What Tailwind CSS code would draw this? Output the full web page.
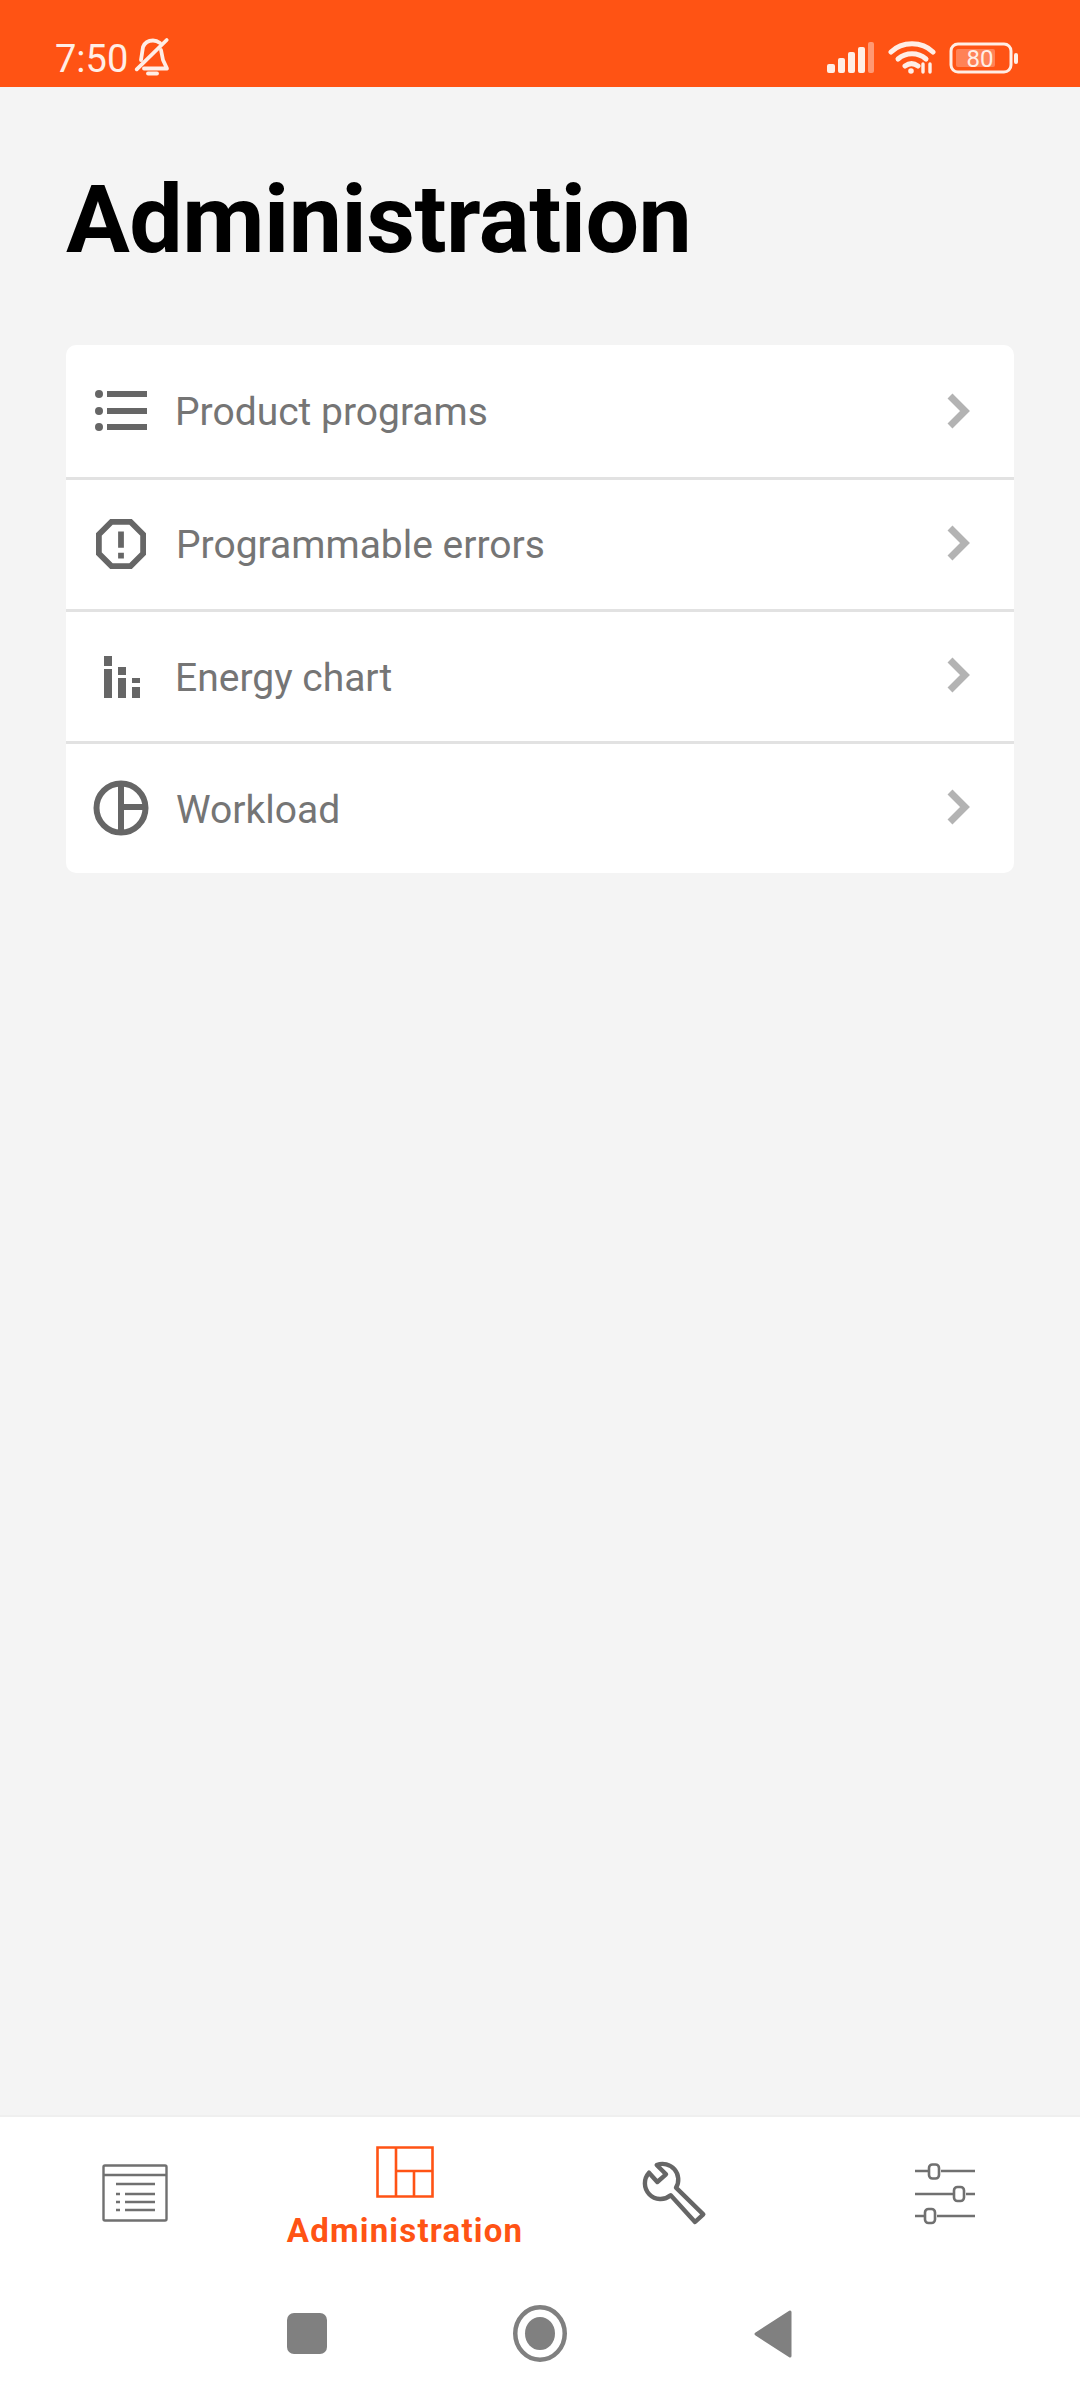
<!DOCTYPE html>
<html lang="en">
<head>
  <meta charset="UTF-8" />
  <meta name="viewport" content="width=device-width, initial-scale=1.0" />
  <title>Administration</title>
  <script src="https://cdn.jsdelivr.net/npm/@tailwindcss/browser@4"></script>
</head>
<body class="bg-[#f4f4f4] font-['Roboto',sans-serif]">
  <div class="flex flex-col w-[1080px] h-[2400px]">

    <!-- status bar -->
    <div class="flex justify-between items-start h-[87px] bg-[#ff5314] text-[#ffeee6] shrink-0">
      <div class="flex items-start pl-[55px] pt-[30px]">
        <span class="mt-[8px] text-[38px] leading-[42px]">7:50</span>
        <svg width="50" height="55" viewBox="0 0 50 55" class="-ml-[4px]" fill="none" stroke="currentColor" stroke-width="3.8" stroke-linecap="round" stroke-linejoin="round">
          <path d="M12.7 39.3 42.7 10"/>
          <path d="M17 30 19 17C21 12 25 10.5 29 10.5c3 0 5 1 7 2.5"/>
          <path d="M37 20 39 30 43 38.5H20"/>
          <path d="M24 43.5h9"/>
        </svg>
      </div>
      <div class="flex items-start pt-[40px] pr-[61px] gap-[13px]">
        <svg width="48" height="34" viewBox="0 0 48 34" fill="currentColor">
          <rect x="0" y="24" width="8" height="9" rx="2"/>
          <rect x="11" y="18" width="7" height="15" rx="2"/>
          <rect x="21" y="12" width="7" height="21" rx="2"/>
          <rect x="31" y="7" width="7" height="26" rx="2"/>
          <rect x="41" y="2" width="6" height="31" rx="2" opacity=".45"/>
        </svg>
        <svg width="48" height="34" viewBox="0 0 48 34" fill="none" stroke="currentColor" stroke-width="5" stroke-linecap="round">
          <path d="M3 12C14 1 34 1 45 12"/>
          <path d="M10 19c8-7 20-7 28 0"/>
          <path d="M17 26c4-3 9-3 13 0" />
          <circle cx="23" cy="31" r="1.8" fill="currentColor" stroke-width="2"/>
          <path d="M35 24v8M42 24v8" stroke-width="3.4"/>
        </svg>
        <svg width="70" height="32" viewBox="0 0 70 32" class="mt-[2px]" fill="none">
          <rect x="2" y="2" width="60" height="28" rx="7" stroke="currentColor" stroke-width="3"/>
          <rect x="7" y="7" width="39" height="18" rx="2" fill="#ff8257"/>
          <rect x="65" y="11" width="4" height="11" rx="2" fill="currentColor"/>
          <text x="31" y="25" text-anchor="middle" font-size="24" fill="currentColor" font-family="Roboto">80</text>
        </svg>
      </div>
    </div>

    <main class="flex-1 px-[66px]">
      <h1 class="pt-[76px] pb-[68px] text-[95px] leading-[114px] font-bold tracking-[-0.5px] text-black">Administration</h1>

      <div class="bg-white rounded-[10px] overflow-hidden divide-y-[3px] divide-[#e2e2e2]">
        <div class="flex items-center h-[135px]">
          <div class="flex justify-center items-center w-[109px]">
            <svg width="52" height="44" viewBox="0 0 52 44" fill="#666666">
              <circle cx="4" cy="5" r="4"/><circle cx="4" cy="22" r="4"/><circle cx="4" cy="38" r="4"/>
              <rect x="12" y="2" width="40" height="6"/><rect x="12" y="19" width="40" height="6"/><rect x="12" y="35" width="40" height="6"/>
            </svg>
          </div>
          <span class="flex-1 pt-[3px] text-[39px] text-[#757575]">Product programs</span>
          <svg width="24" height="36" viewBox="0 0 24 36" class="mr-[43px]" fill="none" stroke="#b3b3b3" stroke-width="7"><path d="M3 3 18 18 3 33"/></svg>
        </div>
        <div class="flex items-center h-[132px]">
          <div class="flex justify-center items-center w-[109px] pb-[2px]">
            <svg width="50" height="50" viewBox="0 0 52 52" fill="none" stroke="#666666" stroke-width="6">
              <path d="M16 3h20l13 13v20L36 49H16L3 36V16z"/>
              <path d="M26 13v17M26 35v6"/>
            </svg>
          </div>
          <span class="flex-1 pl-[1px] pt-[2px] text-[39px] text-[#757575]">Programmable errors</span>
          <svg width="24" height="36" viewBox="0 0 24 36" class="mr-[43px] -mt-[4px]" fill="none" stroke="#b3b3b3" stroke-width="7"><path d="M3 3 18 18 3 33"/></svg>
        </div>
        <div class="flex items-center h-[132px]">
          <div class="flex justify-center items-center w-[109px]">
            <svg width="36" height="42" viewBox="0 0 36 42" class="ml-[3px]" fill="#666666">
              <rect x="0" y="0" width="8" height="10"/><rect x="0" y="13" width="8" height="29"/>
              <rect x="14" y="11" width="8" height="8"/><rect x="14" y="22" width="8" height="20"/>
              <rect x="28" y="22" width="8" height="5"/><rect x="28" y="31" width="8" height="11"/>
            </svg>
          </div>
          <span class="flex-1 pt-[3px] text-[39px] text-[#757575]">Energy chart</span>
          <svg width="24" height="36" viewBox="0 0 24 36" class="mr-[43px] -mt-[3px]" fill="none" stroke="#b3b3b3" stroke-width="7"><path d="M3 3 18 18 3 33"/></svg>
        </div>
        <div class="flex items-center h-[129px]">
          <div class="flex justify-center items-center w-[109px] pb-[2px]">
            <svg width="56" height="56" viewBox="0 0 56 56" fill="none" stroke="#666666" stroke-width="6">
              <circle cx="28" cy="28" r="24.5"/>
              <path d="M28 3v50M28 27h25"/>
            </svg>
          </div>
          <span class="flex-1 pl-[1px] pt-[3px] text-[39px] text-[#757575]">Workload</span>
          <svg width="24" height="36" viewBox="0 0 24 36" class="mr-[43px] -mt-[3px]" fill="none" stroke="#b3b3b3" stroke-width="7"><path d="M3 3 18 18 3 33"/></svg>
        </div>
      </div>
    </main>

    <!-- bottom tabs -->
    <div class="bg-white border-t-2 border-[#efefef] shrink-0">
      <div class="grid grid-cols-4 h-[166px]">
        <div class="flex justify-center pt-[47px]">
          <svg width="66" height="58" viewBox="0 0 66 58" fill="none" stroke="#707070" stroke-width="2.4">
            <rect x="1.5" y="1.5" width="63" height="55" rx="1.5"/>
            <path d="M1.5 11h63M14 20h39M14 30h4M23 30h30M14 38h4M23 38h30M14 46h4M23 46h30"/>
          </svg>
        </div>
        <div class="flex flex-col items-center pt-[29px] text-[#ff5314]">
          <svg width="58" height="52" viewBox="0 0 58 52" fill="none" stroke="currentColor" stroke-width="2.6">
            <path d="M1.5 1.5h55v49h-55zM20 1.5v49M20 25h36.5M38 25v25.5"/>
          </svg>
          <span class="mt-[14px] text-[33px] leading-[38px] font-bold tracking-[1.2px]">Administration</span>
        </div>
        <div class="flex justify-center pt-[39px]">
          <svg width="70" height="75" viewBox="0 0 70 75" fill="none" stroke="#666666" stroke-width="4.4" stroke-linejoin="round">
            <path d="M9 16.7 17.3 26 26 18.3 16.7 9A15.7 15.7 0 0 1 36 31.7L63.3 58.3 55 66 30.7 39.3A15.7 15.7 0 0 1 9 16.7Z"/>
          </svg>
        </div>
        <div class="flex justify-center pt-[46px]">
          <svg width="62" height="62" viewBox="0 0 62 62" fill="none" stroke="#707070" stroke-width="2.6">
            <path d="M1 8h13M27 8h34M1 31h38M52 31h9M1 53h10M23 53h38"/>
            <rect x="15" y="1.5" width="10" height="14" rx="3.5"/>
            <rect x="40" y="24" width="10" height="14" rx="3.5"/>
            <rect x="11" y="46" width="10" height="14" rx="3.5"/>
          </svg>
        </div>
      </div>

      <!-- system nav -->
      <div class="grid grid-cols-3 w-[699px] ml-[190px] h-[117px] items-start pt-[22px]">
        <div class="flex justify-center pt-[8px]">
          <div class="w-[40px] h-[41px] rounded-[7px] bg-[#808080]"></div>
        </div>
        <div class="flex justify-center">
          <svg width="54" height="57" viewBox="0 0 54 57" fill="none">
            <ellipse cx="27" cy="28.5" rx="24.75" ry="26.25" stroke="#808080" stroke-width="4.5"/>
            <ellipse cx="27" cy="28.5" rx="15" ry="16.5" fill="#808080"/>
          </svg>
        </div>
        <div class="flex justify-center pt-[5px]">
          <svg width="38" height="48" viewBox="0 0 38 48" fill="#808080" stroke="#808080" stroke-width="3" stroke-linejoin="round">
            <path d="M2 24 36 2v44z"/>
          </svg>
        </div>
      </div>
    </div>
  </div>
</body>
</html>
